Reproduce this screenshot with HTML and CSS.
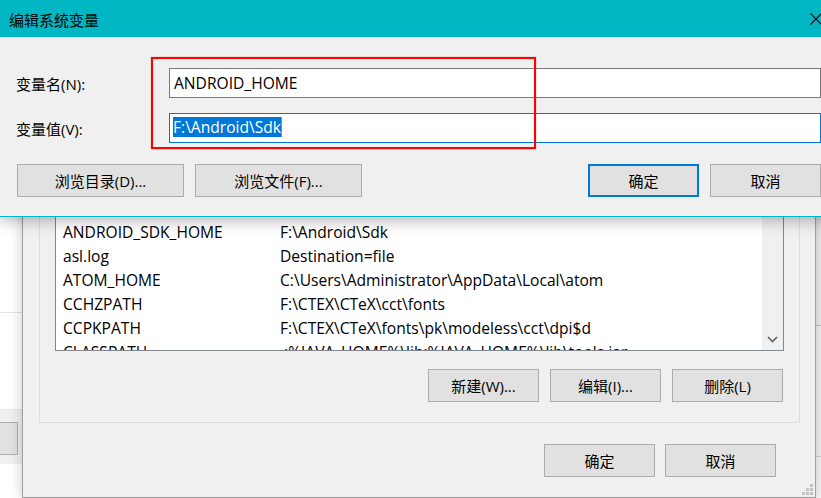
FILE: index.html
```html
<!DOCTYPE html>
<html lang="zh-CN">
<head>
<meta charset="utf-8">
<title>编辑系统变量</title>
<link rel="stylesheet" href="styles.css">
</head>
<body>
<div class="desk">
  <div class="bg-left">
    <div class="bgl-top"></div>
    <div class="bgl-mid"></div>
    <div class="bgl-band"><div class="bgl-btn"></div></div>
  </div>
  <div class="bg-right">
    <div class="bgr-top"></div>
    <div class="bgr-mid"></div>
    <div class="bgr-bot"></div>
  </div>

  <div class="env">
    <div class="group">
      <div class="list">
        <div class="rows">
          <div class="row"><span class="k">ANDROID_HOME</span><span class="v">F:\Android\Sdk</span></div>
          <div class="row"><span class="k">ANDROID_SDK_HOME</span><span class="v">F:\Android\Sdk</span></div>
          <div class="row"><span class="k">asl.log</span><span class="v">Destination=file</span></div>
          <div class="row"><span class="k">ATOM_HOME</span><span class="v">C:\Users\Administrator\AppData\Local\atom</span></div>
          <div class="row"><span class="k">CCHZPATH</span><span class="v">F:\CTEX\CTeX\cct\fonts</span></div>
          <div class="row"><span class="k">CCPKPATH</span><span class="v">F:\CTEX\CTeX\fonts\pk\modeless\cct\dpi$d</span></div>
          <div class="row"><span class="k">CLASSPATH</span><span class="v">.;%JAVA_HOME%\lib;%JAVA_HOME%\lib\tools.jar</span></div>
        </div>
        <div class="scroll">
          <div class="scroll-down">
            <svg width="11" height="7" viewBox="0 0 11 7"><path d="M1 1 L5.5 5.5 L10 1" fill="none" stroke="#606060" stroke-width="1.6"/></svg>
          </div>
        </div>
      </div>
      <div class="btns">
        <button class="btn w111">新建(W)...</button>
        <button class="btn w111">编辑(I)...</button>
        <button class="btn w111">删除(L)</button>
      </div>
    </div>
    <div class="btns bottom">
      <button class="btn w111">确定</button>
      <button class="btn w111">取消</button>
    </div>
    <svg class="grip" width="11" height="11" viewBox="0 0 11 11">
      <rect x="8" y="0" width="3" height="3" fill="#c2c2c2"/>
      <rect x="4" y="4" width="3" height="3" fill="#c2c2c2"/>
      <rect x="8" y="4" width="3" height="3" fill="#c2c2c2"/>
      <rect x="0" y="8" width="3" height="3" fill="#c2c2c2"/>
      <rect x="4" y="8" width="3" height="3" fill="#c2c2c2"/>
      <rect x="8" y="8" width="3" height="3" fill="#c2c2c2"/>
    </svg>
  </div>

  <div class="edit">
    <div class="titlebar">
      <span class="title">编辑系统变量</span>
      <div class="close">
        <svg width="12" height="12" viewBox="0 0 12 12"><path d="M0.5 0.5 L11.5 11.5 M11.5 0.5 L0.5 11.5" stroke="#000" stroke-width="1.1" fill="none"/></svg>
      </div>
    </div>
    <div class="edit-body">
      <div class="form">
        <label class="lbl">变量名(N):</label>
        <div class="field">ANDROID_HOME</div>
        <label class="lbl">变量值(V):</label>
        <div class="field focus"><span class="sel">F:\Android\Sdk</span><span class="caret"></span></div>
      </div>
      <div class="edit-btns">
        <div class="left">
          <button class="btn w167">浏览目录(D)...</button>
          <button class="btn w167">浏览文件(F)...</button>
        </div>
        <div class="right">
          <button class="btn w111 default">确定</button>
          <button class="btn w111">取消</button>
        </div>
      </div>
    </div>
    <div class="annot"></div>
  </div>
</div>
</body>
</html>
```

FILE: styles.css
```css
html, body {
  margin: 0;
  padding: 0;
}
body {
  width: 821px;
  height: 498px;
  overflow: hidden;
  background: #ffffff;
  font-family: "Open Sans", "Noto Sans CJK SC", sans-serif;
  font-size: 15px;
  color: #000;
}
.desk {
  position: relative;
  width: 821px;
  height: 498px;
  overflow: hidden;
}

/* background windows */
.bg-left {
  position: absolute;
  left: 0;
  top: 216px;
  width: 22px;
  height: 282px;
  background: #ffffff;
}
.bgl-top {
  height: 96px;
  border-bottom: 1px solid #e3e3e3;
}
.bgl-mid {
  height: 96px;
}
.bgl-band {
  height: 55px;
  background: #f0f0f0;
  border-top: 1px solid #e6e6e6;
  padding-top: 12px;
  box-sizing: border-box;
}
.bgl-btn {
  width: 18px;
  height: 33px;
  box-sizing: border-box;
  background: #e1e1e1;
  border: 1px solid #adadad;
  border-left: none;
}
.bg-right {
  position: absolute;
  left: 816px;
  top: 216px;
  width: 10px;
  height: 282px;
  display: flex;
  flex-direction: column;
}
.bgr-top {
  height: 109px;
  background: #eeeeee;
  border-bottom: 1px solid #c4c4c4;
}
.bgr-mid {
  height: 130px;
  background: #f2f2f2;
  border-bottom: 1px solid #cfcfcf;
}
.bgr-bot {
  flex: 1;
  background: #f8f8f8;
}

/* environment variables dialog (behind) */
.env {
  position: absolute;
  left: 22px;
  top: 140px;
  width: 794px;
  height: 358px;
  box-sizing: border-box;
  background: #f0f0f0;
  border: 1px solid #a0a0a0;
  box-shadow: 0 0 12px rgba(0, 0, 0, 0.22);
  padding: 19px 15px 0 16px;
  display: flex;
  flex-direction: column;
}
.group {
  height: 263px;
  box-sizing: border-box;
  border: 1px solid #dcdcdc;
  padding: 34px 15px 20px 15px;
  display: flex;
  flex-direction: column;
}
.list {
  height: 156px;
  box-sizing: border-box;
  border: 1px solid #828790;
  background: #ffffff;
  display: flex;
}
.rows {
  flex: 1;
  min-width: 0;
  overflow: hidden;
  padding-left: 7px;
  font-size: 15.6px;
}
.row {
  height: 24px;
  line-height: 24px;
  white-space: nowrap;
  display: flex;
}
.k {
  width: 217px;
  flex: none;
}
.v {
  flex: none;
}
.scroll {
  width: 21px;
  flex: none;
  background: #f0f0f0;
  display: flex;
  flex-direction: column;
  justify-content: flex-end;
}
.scroll-down {
  height: 21px;
  display: flex;
  align-items: center;
  justify-content: center;
}
.btns {
  display: flex;
  justify-content: flex-end;
  gap: 11px;
  margin-top: 18px;
  margin-right: 1px;
}
.btns.bottom {
  gap: 10px;
  margin-top: 21px;
  margin-right: 24px;
}
.grip {
  position: absolute;
  right: 2px;
  bottom: 2px;
}

.btn {
  height: 33px;
  box-sizing: border-box;
  background: #e1e1e1;
  border: 1px solid #adadad;
  font-family: "Open Sans", "Noto Sans CJK SC", sans-serif;
  font-size: 15px;
  color: #000;
  padding: 0;
  margin: 0;
  line-height: 20px;
}
.w111 { width: 111px; }
.w167 { width: 167px; }
.btn.default {
  border: 2px solid #0078d7;
}

/* edit dialog (front) */
.edit {
  position: absolute;
  left: 0;
  top: 0;
  width: 839px;
  height: 217px;
  box-sizing: border-box;
  background: #f0f0f0;
  border-bottom: 1px solid #00b7c3;
  box-shadow: 0 4px 14px rgba(0, 0, 0, 0.28);
}
.titlebar {
  height: 37px;
  background: #00b7c3;
  display: flex;
  align-items: center;
  justify-content: space-between;
}
.title {
  padding-left: 9px;
  padding-top: 3px;
  font-size: 15px;
  line-height: 20px;
}
.close {
  width: 46px;
  height: 37px;
  display: flex;
  align-items: center;
  justify-content: center;
}
.edit-body {
  padding: 31px 18px 0 16px;
}
.form {
  display: grid;
  grid-template-columns: 153px 1fr;
  row-gap: 15px;
  align-items: center;
}
.lbl {
  line-height: 20px;
  padding-top: 2px;
}
.field {
  height: 30px;
  box-sizing: border-box;
  border: 1px solid #7a7a7a;
  background: #fff;
  padding: 0 4px;
  line-height: 27px;
  font-size: 15.6px;
  display: flex;
  align-items: center;
  white-space: nowrap;
}
.field.focus {
  border-color: #0078d7;
  padding-left: 3px;
}
.sel {
  background: #0078d7;
  color: #fff;
  line-height: 20px;
  margin-top: -3px;
}
.caret {
  width: 1px;
  height: 20px;
  margin-top: -3px;
  background: #e07a20;
}
.edit-btns {
  margin-top: 21px;
  margin-left: 1px;
  display: flex;
  justify-content: space-between;
}
.edit-btns .left,
.edit-btns .right {
  display: flex;
  gap: 11px;
}
.annot {
  position: absolute;
  left: 151px;
  top: 57px;
  width: 385px;
  height: 92px;
  box-sizing: border-box;
  border: 2px solid #ff0000;
  box-shadow: 0 0 1px rgba(255, 0, 0, 0.6);
}
```
